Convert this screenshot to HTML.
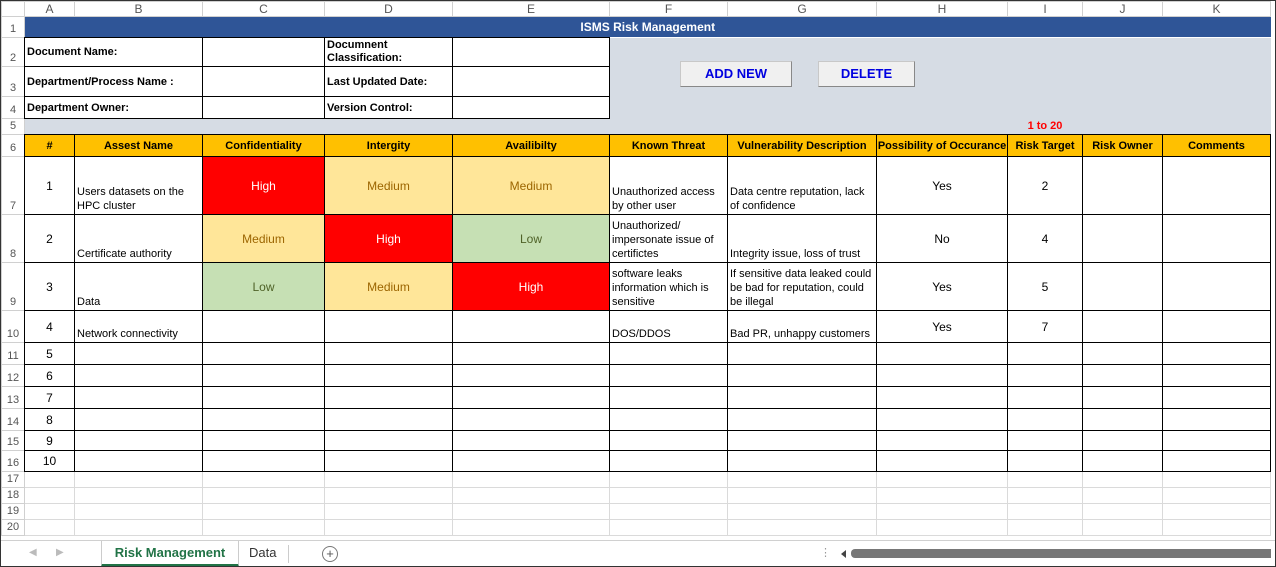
<!DOCTYPE html>
<html><head><meta charset="utf-8"><style>
body{margin:0;width:1276px;height:567px;overflow:hidden;background:#fff;font-family:"Liberation Sans",Arial,sans-serif;position:relative}
.frame{position:absolute;left:0;top:0;width:1274px;height:565px;border:1px solid #333}
table{position:absolute;left:1px;top:1px;border-collapse:collapse;table-layout:fixed}
td{border:1px ridge #dadada;padding:0 2px;font-size:11px;overflow:hidden;white-space:nowrap;color:#000;line-height:14px}
td.rh{background:#fff;color:#555;font-size:11px;text-align:center;vertical-align:bottom;padding:0 0 1px 0;border-color:#d0d0d0}
tr.ch td{color:#555;font-size:12px;text-align:center;vertical-align:middle;border-color:#d0d0d0}
.b td.k,td.k{border:1px solid #000}
.bl{font-weight:bold}
.gray{background:#d6dce4;border:none!important}
.hdr{background:#ffc000;font-weight:bold;text-align:center;border:1px solid #000;font-size:11px}
.c{text-align:center;vertical-align:middle;font-size:12px}
.bt{vertical-align:bottom;white-space:normal;padding-bottom:1px}
.hi{background:#f00;color:#fff;text-align:center;font-size:12px}
.me{background:#ffe699;color:#9c6500;text-align:center;font-size:12px}
.lo{background:#c6e0b4;color:#4f6228;text-align:center;font-size:12px}
.btn{position:absolute;height:24px;background:#f0f0f0;border:1px solid #c8c8c8;border-right-color:#888;border-bottom-color:#888;color:#0000e0;font-weight:bold;font-size:13px;text-align:center;line-height:24px}
.tabs{position:absolute;left:1px;top:540px;width:1274px;height:26px;background:#fff;border-top:1px solid #d0d0d0}
</style></head><body>
<table>
<colgroup><col style="width:23px"><col style="width:50px"><col style="width:128px"><col style="width:122px"><col style="width:128px"><col style="width:157px"><col style="width:118px"><col style="width:149px"><col style="width:131px"><col style="width:75px"><col style="width:80px"><col style="width:108px"><col style="width:4px"></colgroup>
<tr class="ch" style="height:15px"><td style="border-color:#d0d0d0"></td><td>A</td><td>B</td><td>C</td><td>D</td><td>E</td><td>F</td><td>G</td><td>H</td><td>I</td><td>J</td><td>K</td><td style="border:none"></td></tr>
<tr style="height:21px"><td class="rh">1</td><td colspan="11" style="background:#2f5597;color:#fff;font-weight:bold;text-align:center;font-size:12px;border:none">ISMS Risk Management</td><td style="border:none"></td></tr>
<tr style="height:29px"><td class="rh">2</td><td colspan="2" class="k bl">Document Name:</td><td class="k"></td><td class="k bl" style="white-space:normal;line-height:13px">Documnent Classification:</td><td class="k"></td><td colspan="6" rowspan="3" class="gray"></td><td style="border:none"></td></tr>
<tr style="height:30px"><td class="rh">3</td><td colspan="2" class="k bl">Department/Process Name :</td><td class="k"></td><td class="k bl">Last Updated Date:</td><td class="k"></td><td style="border:none"></td></tr>
<tr style="height:22px"><td class="rh">4</td><td colspan="2" class="k bl">Department Owner:</td><td class="k"></td><td class="k bl">Version Control:</td><td class="k"></td><td style="border:none"></td></tr>
<tr style="height:16px"><td class="rh">5</td><td colspan="8" class="gray"></td><td class="gray" style="color:#f00;font-weight:bold;text-align:center;font-size:11px">1 to 20</td><td colspan="2" class="gray"></td><td style="border:none"></td></tr>
<tr style="height:22px"><td class="rh">6</td><td class="hdr">#</td><td class="hdr">Assest Name</td><td class="hdr">Confidentiality</td><td class="hdr">Intergity</td><td class="hdr">Availibilty</td><td class="hdr">Known Threat</td><td class="hdr">Vulnerability Description</td><td class="hdr" style="padding:0">Possibility of Occurance</td><td class="hdr">Risk Target</td><td class="hdr">Risk Owner</td><td class="hdr">Comments</td><td style="border:none"></td></tr>
<tr style="height:58px"><td class="rh">7</td><td class="k c">1</td><td class="k bt">Users datasets on the HPC cluster</td><td class="k hi">High</td><td class="k me">Medium</td><td class="k me">Medium</td><td class="k bt">Unauthorized access by other user</td><td class="k bt">Data centre reputation, lack of confidence</td><td class="k c">Yes</td><td class="k c">2</td><td class="k"></td><td class="k"></td><td style="border:none"></td></tr>
<tr style="height:48px"><td class="rh">8</td><td class="k c">2</td><td class="k bt">Certificate authority</td><td class="k me">Medium</td><td class="k hi">High</td><td class="k lo">Low</td><td class="k bt">Unauthorized/ impersonate issue of certifictes</td><td class="k bt">Integrity issue, loss of trust</td><td class="k c">No</td><td class="k c">4</td><td class="k"></td><td class="k"></td><td style="border:none"></td></tr>
<tr style="height:48px"><td class="rh">9</td><td class="k c">3</td><td class="k bt">Data</td><td class="k lo">Low</td><td class="k me">Medium</td><td class="k hi">High</td><td class="k bt">software leaks information which is sensitive</td><td class="k bt">If sensitive data leaked could be bad for reputation, could be illegal</td><td class="k c">Yes</td><td class="k c">5</td><td class="k"></td><td class="k"></td><td style="border:none"></td></tr>
<tr style="height:32px"><td class="rh">10</td><td class="k c">4</td><td class="k bt">Network connectivity</td><td class="k"></td><td class="k"></td><td class="k"></td><td class="k bt">DOS/DDOS</td><td class="k bt">Bad PR, unhappy customers</td><td class="k c">Yes</td><td class="k c">7</td><td class="k"></td><td class="k"></td><td style="border:none"></td></tr>
<tr style="height:22px"><td class="rh">11</td><td class="k c">5</td><td class="k"></td><td class="k"></td><td class="k"></td><td class="k"></td><td class="k"></td><td class="k"></td><td class="k"></td><td class="k"></td><td class="k"></td><td class="k"></td><td style="border:none"></td></tr>
<tr style="height:22px"><td class="rh">12</td><td class="k c">6</td><td class="k"></td><td class="k"></td><td class="k"></td><td class="k"></td><td class="k"></td><td class="k"></td><td class="k"></td><td class="k"></td><td class="k"></td><td class="k"></td><td style="border:none"></td></tr>
<tr style="height:22px"><td class="rh">13</td><td class="k c">7</td><td class="k"></td><td class="k"></td><td class="k"></td><td class="k"></td><td class="k"></td><td class="k"></td><td class="k"></td><td class="k"></td><td class="k"></td><td class="k"></td><td style="border:none"></td></tr>
<tr style="height:22px"><td class="rh">14</td><td class="k c">8</td><td class="k"></td><td class="k"></td><td class="k"></td><td class="k"></td><td class="k"></td><td class="k"></td><td class="k"></td><td class="k"></td><td class="k"></td><td class="k"></td><td style="border:none"></td></tr>
<tr style="height:20px"><td class="rh">15</td><td class="k c">9</td><td class="k"></td><td class="k"></td><td class="k"></td><td class="k"></td><td class="k"></td><td class="k"></td><td class="k"></td><td class="k"></td><td class="k"></td><td class="k"></td><td style="border:none"></td></tr>
<tr style="height:21px"><td class="rh">16</td><td class="k c">10</td><td class="k"></td><td class="k"></td><td class="k"></td><td class="k"></td><td class="k"></td><td class="k"></td><td class="k"></td><td class="k"></td><td class="k"></td><td class="k"></td><td style="border:none"></td></tr>
<tr style="height:16px"><td class="rh">17</td><td></td><td></td><td></td><td></td><td></td><td></td><td></td><td></td><td></td><td></td><td></td><td style="border:none"></td></tr>
<tr style="height:16px"><td class="rh">18</td><td></td><td></td><td></td><td></td><td></td><td></td><td></td><td></td><td></td><td></td><td></td><td style="border:none"></td></tr>
<tr style="height:16px"><td class="rh">19</td><td></td><td></td><td></td><td></td><td></td><td></td><td></td><td></td><td></td><td></td><td></td><td style="border:none"></td></tr>
<tr style="height:16px"><td class="rh">20</td><td></td><td></td><td></td><td></td><td></td><td></td><td></td><td></td><td></td><td></td><td></td><td style="border:none"></td></tr>
</table>
<div class="btn" style="left:680px;top:61px;width:110px">ADD NEW</div>
<div class="btn" style="left:818px;top:61px;width:95px">DELETE</div>
<div class="tabs">
<div style="position:absolute;left:28px;top:6px;color:#bbb;font-size:10px">&#9664;</div>
<div style="position:absolute;left:55px;top:6px;color:#bbb;font-size:10px">&#9654;</div>
<div style="position:absolute;left:100px;top:0;width:136px;height:23px;border-bottom:3px solid #217346;background:#fff;color:#217346;font-weight:bold;font-size:13px;text-align:center;line-height:24px;border-left:1px solid #ccc;border-right:1px solid #ccc">Risk Management</div>
<div style="position:absolute;left:248px;top:0;line-height:24px;font-size:13px;color:#333">Data</div>
<div style="position:absolute;left:287px;top:4px;width:1px;height:18px;background:#ccc"></div>
<div style="position:absolute;left:321px;top:5px;width:14px;height:14px;border:1px solid #777;border-radius:50%;text-align:center;line-height:14px;font-size:13px;color:#555">+</div>
<div style="position:absolute;left:819px;top:5px;color:#999;font-size:11px">&#8942;</div>
<div style="position:absolute;left:840px;top:9px;width:0;height:0;border-top:4px solid transparent;border-bottom:4px solid transparent;border-right:5px solid #444"></div>
<div style="position:absolute;left:850px;top:8px;width:420px;height:9px;background:#777;border-radius:4px 0 0 4px"></div>
</div>
<div class="frame"></div>
</body></html>
